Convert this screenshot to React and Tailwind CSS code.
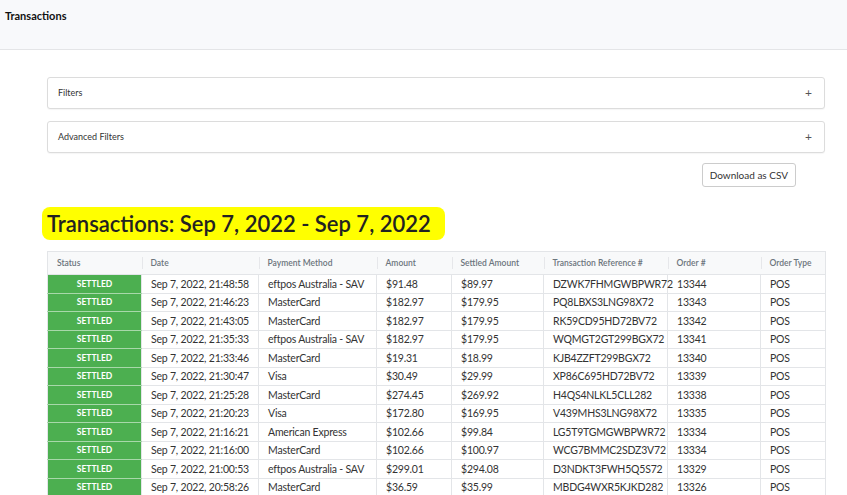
import React from 'react';

const rows = [
  ['Sep 7, 2022, 21:48:58', 'eftpos Australia - SAV', '$91.48', '$89.97', 'DZWK7FHMGWBPWR72', '13344'],
  ['Sep 7, 2022, 21:46:23', 'MasterCard', '$182.97', '$179.95', 'PQ8LBXS3LNG98X72', '13343'],
  ['Sep 7, 2022, 21:43:05', 'MasterCard', '$182.97', '$179.95', 'RK59CD95HD72BV72', '13342'],
  ['Sep 7, 2022, 21:35:33', 'eftpos Australia - SAV', '$182.97', '$179.95', 'WQMGT2GT299BGX72', '13341'],
  ['Sep 7, 2022, 21:33:46', 'MasterCard', '$19.31', '$18.99', 'KJB4ZZFT299BGX72', '13340'],
  ['Sep 7, 2022, 21:30:47', 'Visa', '$30.49', '$29.99', 'XP86C695HD72BV72', '13339'],
  ['Sep 7, 2022, 21:25:28', 'MasterCard', '$274.45', '$269.92', 'H4QS4NLKL5CLL282', '13338'],
  ['Sep 7, 2022, 21:20:23', 'Visa', '$172.80', '$169.95', 'V439MHS3LNG98X72', '13335'],
  ['Sep 7, 2022, 21:16:21', 'American Express', '$102.66', '$99.84', 'LG5T9TGMGWBPWR72', '13334'],
  ['Sep 7, 2022, 21:16:00', 'MasterCard', '$102.66', '$100.97', 'WCG7BMMC2SDZ3V72', '13334'],
  ['Sep 7, 2022, 21:00:53', 'eftpos Australia - SAV', '$299.01', '$294.08', 'D3NDKT3FWH5Q5S72', '13329'],
  ['Sep 7, 2022, 20:58:26', 'MasterCard', '$36.59', '$35.99', 'MBDG4WXR5KJKD282', '13326'],
];

const columns = [
  { label: 'Status', w: 'w-[94px]' },
  { label: 'Date', w: 'w-[117px]' },
  { label: 'Payment Method', w: 'w-[118px]' },
  { label: 'Amount', w: 'w-[75px]' },
  { label: 'Settled Amount', w: 'w-[92px]' },
  { label: 'Transaction Reference #', w: 'w-[124px]' },
  { label: 'Order #', w: 'w-[93px]' },
  { label: 'Order Type', w: 'w-[65px]' },
];

const FilterCard = ({ title }) => (
  <div className="h-[32px] border border-[#dcdcdc] rounded-[3px] bg-white flex items-center justify-between pl-[10px] pr-[12px] shadow-[0_1px_1px_rgba(0,0,0,0.04)]">
    <span className="text-[9px] text-[#333]">{title}</span>
    <span className="text-[12px] text-[#555] leading-none">+</span>
  </div>
);

export default function App() {
  return (
    <div className="h-[495px] overflow-hidden bg-white font-['Lato',sans-serif] text-[#212529]">
      {/* top bar */}
      <div className="h-[50px] bg-[#f8f9fb] border-b border-[#e4e5e7] pl-[5px] pt-[8px] text-[11px] leading-[16px] font-bold text-[#111]">
        Transactions
      </div>

      <div className="px-[47px] pt-[27px] w-[872px]">
        <div className="w-[778px] flex flex-col gap-[12px]">
          <FilterCard title="Filters" />
          <FilterCard title="Advanced Filters" />
        </div>

        <div className="w-[778px] flex justify-end pr-[29px] mt-[10px]">
          <button className="h-[24px] px-[7px] border border-[#ccc] rounded-[3px] bg-white text-[10px] text-[#333]">
            Download as CSV
          </button>
        </div>

        {/* highlighted heading */}
        <div className="mt-[20px] -ml-[5px]">
          <span className="inline-block bg-[#ffff00] pl-[5px] pr-[14px] py-[2px] rounded-[8px] text-[22px] leading-[29px] font-semibold text-[#222]">
            Transactions: Sep 7, 2022 - Sep 7, 2022
          </span>
        </div>

        <table className="mt-[11px] w-[778px] table-fixed border-collapse border border-[#e3e5e8]">
          <thead>
            <tr className="h-[22px] bg-[#f8f9fa] border-b border-[#e3e5e8]">
              {columns.map((c, i) => (
                <th key={c.label} className={`${c.w} p-0 text-left font-semibold text-[8.5px] text-[#6c757d]`}>
                  <div className={`flex items-center ${i === 0 ? 'h-[22px] pl-[9px]' : 'pl-[8px] border-l border-[#e6e7ea] h-[12px]'}`}>
                    {c.label}
                  </div>
                </th>
              ))}
            </tr>
          </thead>
          <tbody>
            {rows.map((r, i) => (
              <tr key={i} className="h-[18.5px] text-[10.5px] tracking-[-0.2px] text-[#333]">
                <td className="p-0 bg-[#4caf50] border-b border-[#a8d8aa] text-center text-white font-bold text-[8.5px] tracking-normal leading-none">
                  SETTLED
                </td>
                {r.map((v, j) => (
                  <td key={j} className="p-0 pl-[9px] border border-[#e3e5e8] whitespace-nowrap leading-none">
                    {v}
                  </td>
                ))}
                <td className="p-0 pl-[9px] border border-[#e3e5e8] leading-none">POS</td>
              </tr>
            ))}
          </tbody>
        </table>
      </div>
    </div>
  );
}
